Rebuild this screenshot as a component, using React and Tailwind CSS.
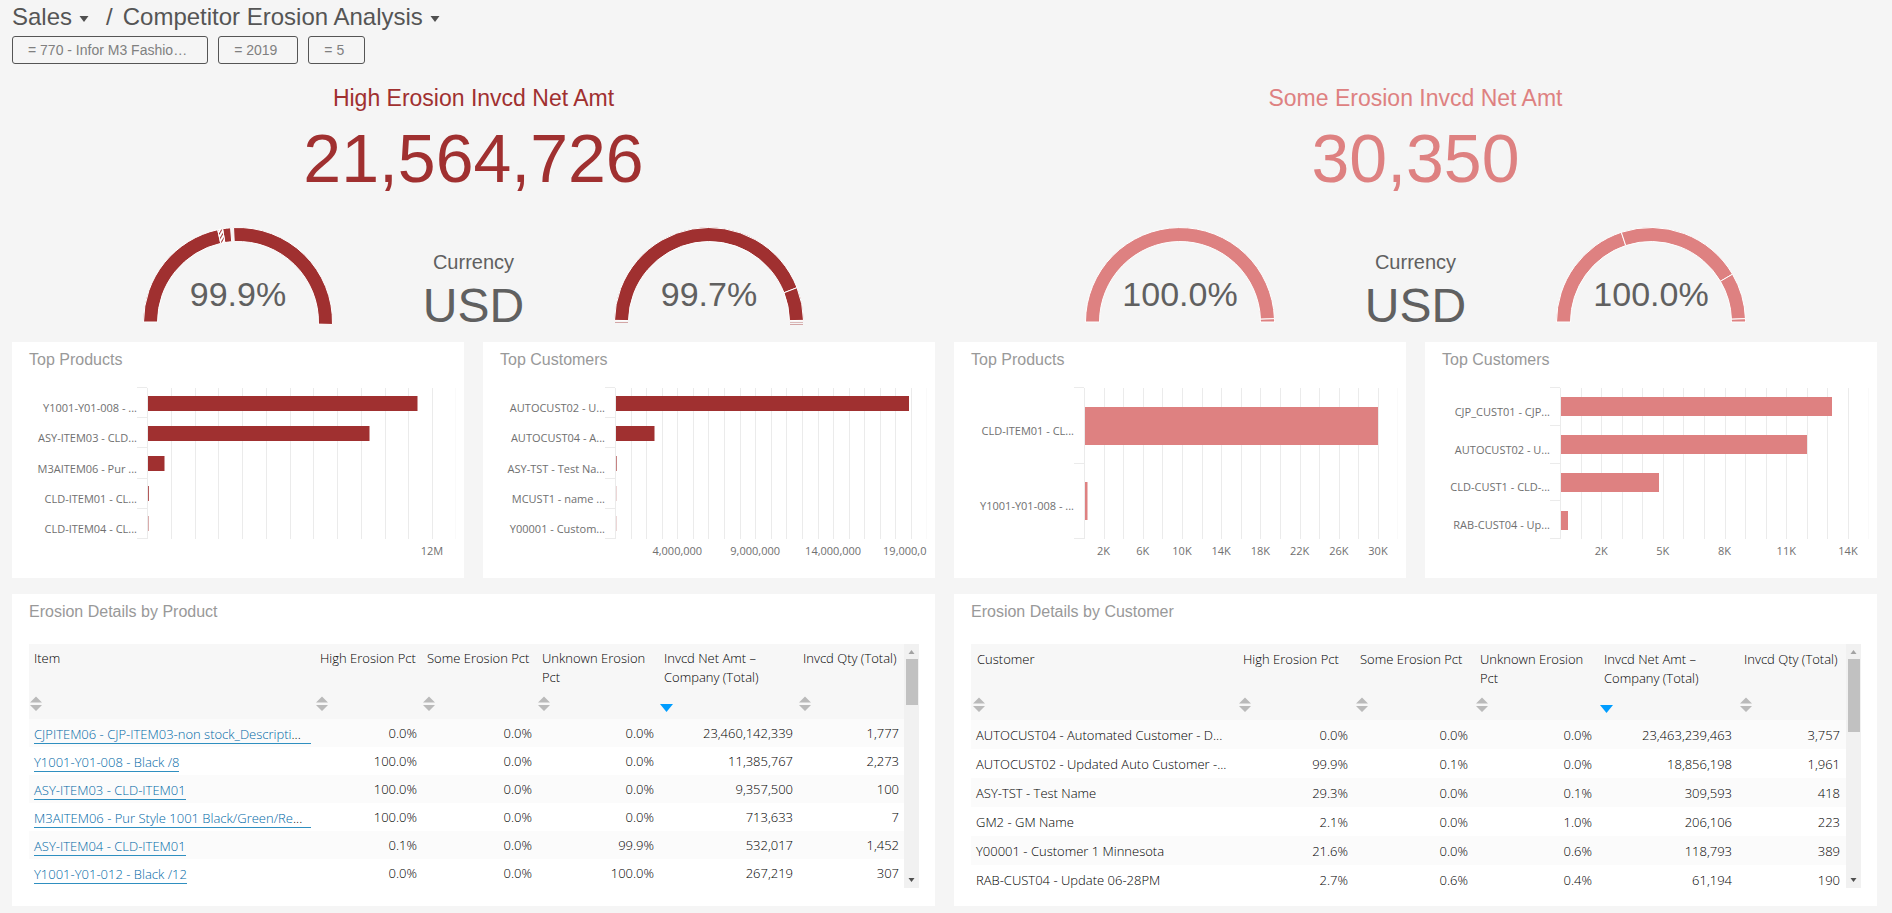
import React from 'react';

const HIGH = '#a03030';
const SOME = '#de8181';

const filters = ['= 770 - Infor M3 Fashio…', '= 2019', '= 5'];

// Chart geometry is in the units of the 452 x 196 view box
const charts = {
  highProducts: {
    axis: 136,
    end: 421,
    steps: 12,
    bars: [
      { label: 'Y1001-Y01-008 - ...', to: 405.5 },
      { label: 'ASY-ITEM03 - CLD...', to: 357.5 },
      { label: 'M3AITEM06 - Pur ...', to: 152.5 },
      { label: 'CLD-ITEM01 - CL...', to: 137, opacity: 0.8 },
      { label: 'CLD-ITEM04 - CL...', to: 137, opacity: 0.4 },
    ],
    ticks: [{ at: 12, label: '12M' }],
  },
  highCustomers: {
    axis: 133,
    end: 429,
    steps: 19,
    bars: [
      { label: 'AUTOCUST02 - U...', to: 426 },
      { label: 'AUTOCUST04 - A...', to: 171.5 },
      { label: 'ASY-TST - Test Na...', to: 134, opacity: 0.6 },
      { label: 'MCUST1 - name ...', to: 134, opacity: 0.2 },
      { label: 'Y00001 - Custom...', to: 134, opacity: 0.2 },
    ],
    ticks: [
      { at: 4, label: '4,000,000' },
      { at: 9, label: '9,000,000' },
      { at: 14, label: '14,000,000' },
      { at: 18.6, label: '19,000,0' },
    ],
  },
  someProducts: {
    axis: 131,
    end: 425,
    steps: 15,
    bars: [
      { label: 'CLD-ITEM01 - CL...', to: 424 },
      { label: 'Y1001-Y01-008 - ...', to: 133.5 },
    ],
    ticks: [
      { at: 1, label: '2K' },
      { at: 3, label: '6K' },
      { at: 5, label: '10K' },
      { at: 7, label: '14K' },
      { at: 9, label: '18K' },
      { at: 11, label: '22K' },
      { at: 13, label: '26K' },
      { at: 15, label: '30K' },
    ],
  },
  someCustomers: {
    axis: 136,
    end: 424,
    steps: 14,
    bars: [
      { label: 'CJP_CUST01 - CJP...', to: 407 },
      { label: 'AUTOCUST02 - U...', to: 382 },
      { label: 'CLD-CUST1 - CLD-...', to: 234 },
      { label: 'RAB-CUST04 - Up...', to: 143 },
    ],
    ticks: [
      { at: 2, label: '2K' },
      { at: 5, label: '5K' },
      { at: 8, label: '8K' },
      { at: 11, label: '11K' },
      { at: 14, label: '14K' },
    ],
  },
};

const columns = ['High Erosion Pct', 'Some Erosion Pct', 'Unknown Erosion Pct', 'Invcd Net Amt – Company (Total)', 'Invcd Qty (Total)'];

const productRows = [
  { name: 'CJPITEM06 - CJP-ITEM03-non stock_Descripti', cut: true, values: ['0.0%', '0.0%', '0.0%', '23,460,142,339', '1,777'] },
  { name: 'Y1001-Y01-008 - Black /8', values: ['100.0%', '0.0%', '0.0%', '11,385,767', '2,273'] },
  { name: 'ASY-ITEM03 - CLD-ITEM01', values: ['100.0%', '0.0%', '0.0%', '9,357,500', '100'] },
  { name: 'M3AITEM06 - Pur Style 1001 Black/Green/Re', cut: true, values: ['100.0%', '0.0%', '0.0%', '713,633', '7'] },
  { name: 'ASY-ITEM04 - CLD-ITEM01', values: ['0.1%', '0.0%', '99.9%', '532,017', '1,452'] },
  { name: 'Y1001-Y01-012 - Black /12', values: ['0.0%', '0.0%', '100.0%', '267,219', '307'] },
];

const customerRows = [
  { name: 'AUTOCUST04 - Automated Customer - D...', values: ['0.0%', '0.0%', '0.0%', '23,463,239,463', '3,757'] },
  { name: 'AUTOCUST02 - Updated Auto Customer -...', values: ['99.9%', '0.1%', '0.0%', '18,856,198', '1,961'] },
  { name: 'ASY-TST - Test Name', values: ['29.3%', '0.0%', '0.1%', '309,593', '418'] },
  { name: 'GM2 - GM Name', values: ['2.1%', '0.0%', '1.0%', '206,106', '223'] },
  { name: 'Y00001 - Customer 1 Minnesota', values: ['21.6%', '0.0%', '0.6%', '118,793', '389'] },
  { name: 'RAB-CUST04 - Update 06-28PM', values: ['2.7%', '0.6%', '0.4%', '61,194', '190'] },
];

const Caret = () => (
  <svg viewBox="0 0 10 6" className="w-[10px] h-[6px] mt-1" aria-hidden="true">
    <path d="M0.5 0h9L5 6z" fill="#505050" />
  </svg>
);

// Point on the gauge: 0 degrees is the left end, 180 the right end
const polar = (r, deg) => {
  const a = (deg * Math.PI) / 180;
  return `${(95 - r * Math.cos(a)).toFixed(2)} ${(95 - r * Math.sin(a)).toFixed(2)}`;
};

const arc = (from, to) =>
  `M${polar(94.5, from)}A94.5 94.5 0 ${to - from > 180 ? 1 : 0} 1 ${polar(94.5, to)}L${polar(80.5, to)}A80.5 80.5 0 ${to - from > 180 ? 1 : 0} 0 ${polar(80.5, from)}Z`;

const Gauge = ({ value, color, segments, hatch, tails = [] }) => (
  <svg viewBox="0 0 190 104" className="w-[190px] h-[104px] shrink-0" role="img" aria-label={value}>
    <defs>
      <pattern id="hatch" width="3" height="3" patternUnits="userSpaceOnUse" patternTransform="rotate(30)">
        <rect width="3" height="3" fill="#fff" />
        <rect width="1" height="3" fill={HIGH} />
      </pattern>
    </defs>
    {segments.map(([from, to]) => (
      <path key={from} d={arc(from, to)} fill={color} stroke="#fff" strokeWidth="1" />
    ))}
    {hatch && <path d={arc(hatch[0], hatch[1])} fill="url(#hatch)" stroke="#fff" strokeWidth="1" />}
    {tails.map(([x, y, opacity]) => (
      <rect key={`${x}-${y}`} x={x} y={y} width="13" height="1" fill={color} opacity={opacity} />
    ))}
    <text x="95" y="79" textAnchor="middle" fontSize="34" fill="#606060">
      {value}
    </text>
  </svg>
);

const Kpi = ({ title, value, color, children }) => (
  <section className="flex flex-col items-center">
    <h2 className={`text-[23px] leading-7 ${color}`}>{title}</h2>
    <p className={`mt-[7px] text-[68px] leading-[78px] ${color}`}>{value}</p>
    <div className="mt-[30px] flex justify-center gap-[90px]">{children}</div>
  </section>
);

const Currency = () => (
  <div className="pt-[23px] text-center text-[#606060]">
    <p className="text-xl leading-6">Currency</p>
    <p className="mt-2 text-5xl leading-12">USD</p>
  </div>
);

const PLOT_TOP = 6;
const PLOT_HEIGHT = 151;

const BarChart = ({ title, chart, color }) => {
  const { axis, end, steps, bars, ticks } = chart;
  const step = (end - axis) / steps;
  const row = PLOT_HEIGHT / bars.length;
  const bottom = PLOT_TOP + PLOT_HEIGHT;

  return (
    <section className="bg-white">
      <h3 className="h-10 pl-[17px] pt-2 text-base leading-5 text-[#999]">{title}</h3>
      <svg viewBox="0 0 452 196" className="block w-full" fontFamily="'Open Sans', sans-serif" fontSize="11" fill="#707070">
        {Array.from({ length: steps + 1 }, (_, i) => (
          <rect key={i} x={Math.round(axis + i * step) - 1} y={PLOT_TOP} width="1" height={PLOT_HEIGHT} fill="#ebebeb" />
        ))}
        <rect x="443" y={PLOT_TOP} width="1" height={PLOT_HEIGHT} fill="#fafafa" />
        {Array.from({ length: bars.length + 1 }, (_, i) => (
          <rect key={i} x={axis - 11} y={Math.round(PLOT_TOP + i * row) - 1} width="10" height="1" fill="#ebebeb" />
        ))}
        {bars.map((bar, i) => (
          <g key={bar.label}>
            <rect
              x={axis}
              y={Math.round(PLOT_TOP + (i + 0.25) * row)}
              width={bar.to - axis}
              height={Math.round(row / 2)}
              fill={color}
              opacity={bar.opacity ?? 1}
            />
            <text x={axis - 11} y={Math.round(PLOT_TOP + (i + 0.5) * row + 9)} textAnchor="end">
              {bar.label}
            </text>
          </g>
        ))}
        {ticks.map((tick) => (
          <text key={tick.label} x={axis + tick.at * step - 1} y={bottom + 16} textAnchor="middle">
            {tick.label}
          </text>
        ))}
      </svg>
    </section>
  );
};

const SortIcon = ({ active }) =>
  active ? (
    <svg viewBox="0 0 13 16" className="w-[13px] h-4" aria-hidden="true">
      <path d="M0 8h13L6.5 16z" fill="#009dff" />
    </svg>
  ) : (
    <svg viewBox="0 0 12 16" className="w-3 h-4" aria-hidden="true">
      <path d="M0 6.5h12L6 0.5zM0 9h12L6 15z" fill="#bababa" />
    </svg>
  );

const ScrollBar = ({ thumb }) => (
  <div className="flex w-[15px] shrink-0 flex-col items-center bg-[#f1f1f1]" aria-hidden="true">
    <svg viewBox="0 0 15 15" className="w-[15px] h-[15px] shrink-0">
      <path d="M4.5 10h6L7.5 6z" fill="#a3a3a3" />
    </svg>
    <div className={`w-3 bg-[#c1c1c1] ${thumb}`} />
    <svg viewBox="0 0 15 15" className="mt-auto w-[15px] h-[15px] shrink-0">
      <path d="M4.5 5h6L7.5 9z" fill="#505050" />
    </svg>
  </div>
);

const DetailTable = ({ title, nameHeader, rows, widths, linked, headHeight, rowHeight, headPad, cellPad, thumb }) => (
  <section className="bg-white pl-[17px] pr-4 pb-[18px]">
    <h3 className="h-[50px] pt-2 text-base leading-5 text-[#999]">{title}</h3>
    <div className="flex h-[244px] overflow-hidden font-['Open_Sans',sans-serif] text-[13px] font-light text-black">
      <div className="min-w-0 grow">
        <table className="w-full table-fixed border-collapse">
          <colgroup>
            <col />
            {widths.map((width, i) => (
              <col key={i} className={width} />
            ))}
          </colgroup>
          <thead>
            <tr className="bg-[#f7f7f7]">
              {[nameHeader, ...columns].map((name) => (
                <th key={name} scope="col" className="p-0 text-left align-top font-light">
                  <button type="button" className={`flex w-full flex-col justify-between pb-[7px] text-left ${headHeight} ${headPad}`}>
                    <span className="pl-1 leading-[19px]">{name}</span>
                    <SortIcon active={name.startsWith('Invcd Net')} />
                  </button>
                </th>
              ))}
            </tr>
          </thead>
          <tbody>
            {rows.map((row) => (
              <tr key={row.name} className={`odd:bg-[#fbfbfb] ${rowHeight}`}>
                <td className="whitespace-nowrap pt-[2px] pb-0 pl-[5px] pr-1">
                  {linked ? (
                    <a
                      href="#item"
                      className={`block border-b border-[#2f8fc0] leading-[18px] text-[#0068a6] ${row.cut ? 'w-full' : 'w-fit'}`}
                    >
                      {row.name}
                      {row.cut && <span className="text-black">...</span>}
                    </a>
                  ) : (
                    row.name
                  )}
                </td>
                {row.values.map((value, i) => (
                  <td key={i} className={`pt-[2px] pb-0 text-right ${cellPad}`}>
                    {value}
                  </td>
                ))}
              </tr>
            ))}
          </tbody>
        </table>
      </div>
      <ScrollBar thumb={thumb} />
    </div>
  </section>
);

export default function App() {
  return (
    <div className="min-h-screen bg-[#f5f5f5] pl-3 pr-[15px] pb-[7px] font-['Liberation_Sans',Arial,sans-serif]">
      <nav className="flex items-center pt-[3px] text-2xl leading-7 text-[#555]">
        <button type="button" className="flex items-center gap-[7px]">
          Sales <Caret />
        </button>
        <span className="pl-[17px] pr-[10px]">/</span>
        <button type="button" className="flex items-center gap-[7px]">
          Competitor Erosion Analysis <Caret />
        </button>
      </nav>

      <div className="mt-[5px] flex gap-[10px]">
        {filters.map((filter) => (
          <button
            key={filter}
            type="button"
            className="h-7 rounded-[3px] border border-[#555] pl-[15px] pr-5 text-sm text-[#808080]"
          >
            {filter}
          </button>
        ))}
      </div>

      <div className="mt-5 grid grid-cols-2 gap-x-[19px]">
        <Kpi title="High Erosion Invcd Net Amt" value="21,564,726" color="text-[#a03030]">
          <Gauge value="99.9%" color={HIGH} segments={[[0, 77.6], [80.6, 85.5], [87.3, 181.5]]} hatch={[77.6, 80.6]} />
          <Currency />
          <Gauge
            value="99.7%"
            color={HIGH}
            segments={[[1, 158.7], [158.7, 179]]}
            tails={[[1, 95, 0.4], [176, 95, 0.3], [176, 97, 0.4]]}
          />
        </Kpi>
        <Kpi title="Some Erosion Invcd Net Amt" value="30,350" color="text-[#de8181]">
          <Gauge value="100.0%" color={SOME} segments={[[0, 178], [178, 180]]} />
          <Currency />
          <Gauge value="100.0%" color={SOME} segments={[[0, 71.7], [71.7, 149.6], [149.6, 178], [178, 180]]} />
        </Kpi>
      </div>

      <div className="mt-[11px] grid grid-cols-4 gap-x-[19px]">
        <BarChart title="Top Products" chart={charts.highProducts} color={HIGH} />
        <BarChart title="Top Customers" chart={charts.highCustomers} color={HIGH} />
        <BarChart title="Top Products" chart={charts.someProducts} color={SOME} />
        <BarChart title="Top Customers" chart={charts.someCustomers} color={SOME} />
      </div>

      <div className="mt-4 grid grid-cols-2 gap-x-[19px]">
        <DetailTable
          title="Erosion Details by Product"
          nameHeader="Item"
          rows={productRows}
          widths={['w-[107px]', 'w-[115px]', 'w-[122px]', 'w-[139px]', 'w-[106px]']}
          linked
          headHeight="h-[75px]"
          rowHeight="h-[28px]"
          headPad="pt-[5px] pl-px"
          cellPad="pr-[5px]"
          thumb="h-[46px]"
        />
        <DetailTable
          title="Erosion Details by Customer"
          nameHeader="Customer"
          rows={customerRows}
          widths={['w-[117px]', 'w-[120px]', 'w-[124px]', 'w-[140px]', 'w-[108px]']}
          headHeight="h-[76px]"
          rowHeight="h-[29px]"
          headPad="pt-[6px] pl-[2px]"
          cellPad="pr-[6px]"
          thumb="h-[73px]"
        />
      </div>
    </div>
  );
}
